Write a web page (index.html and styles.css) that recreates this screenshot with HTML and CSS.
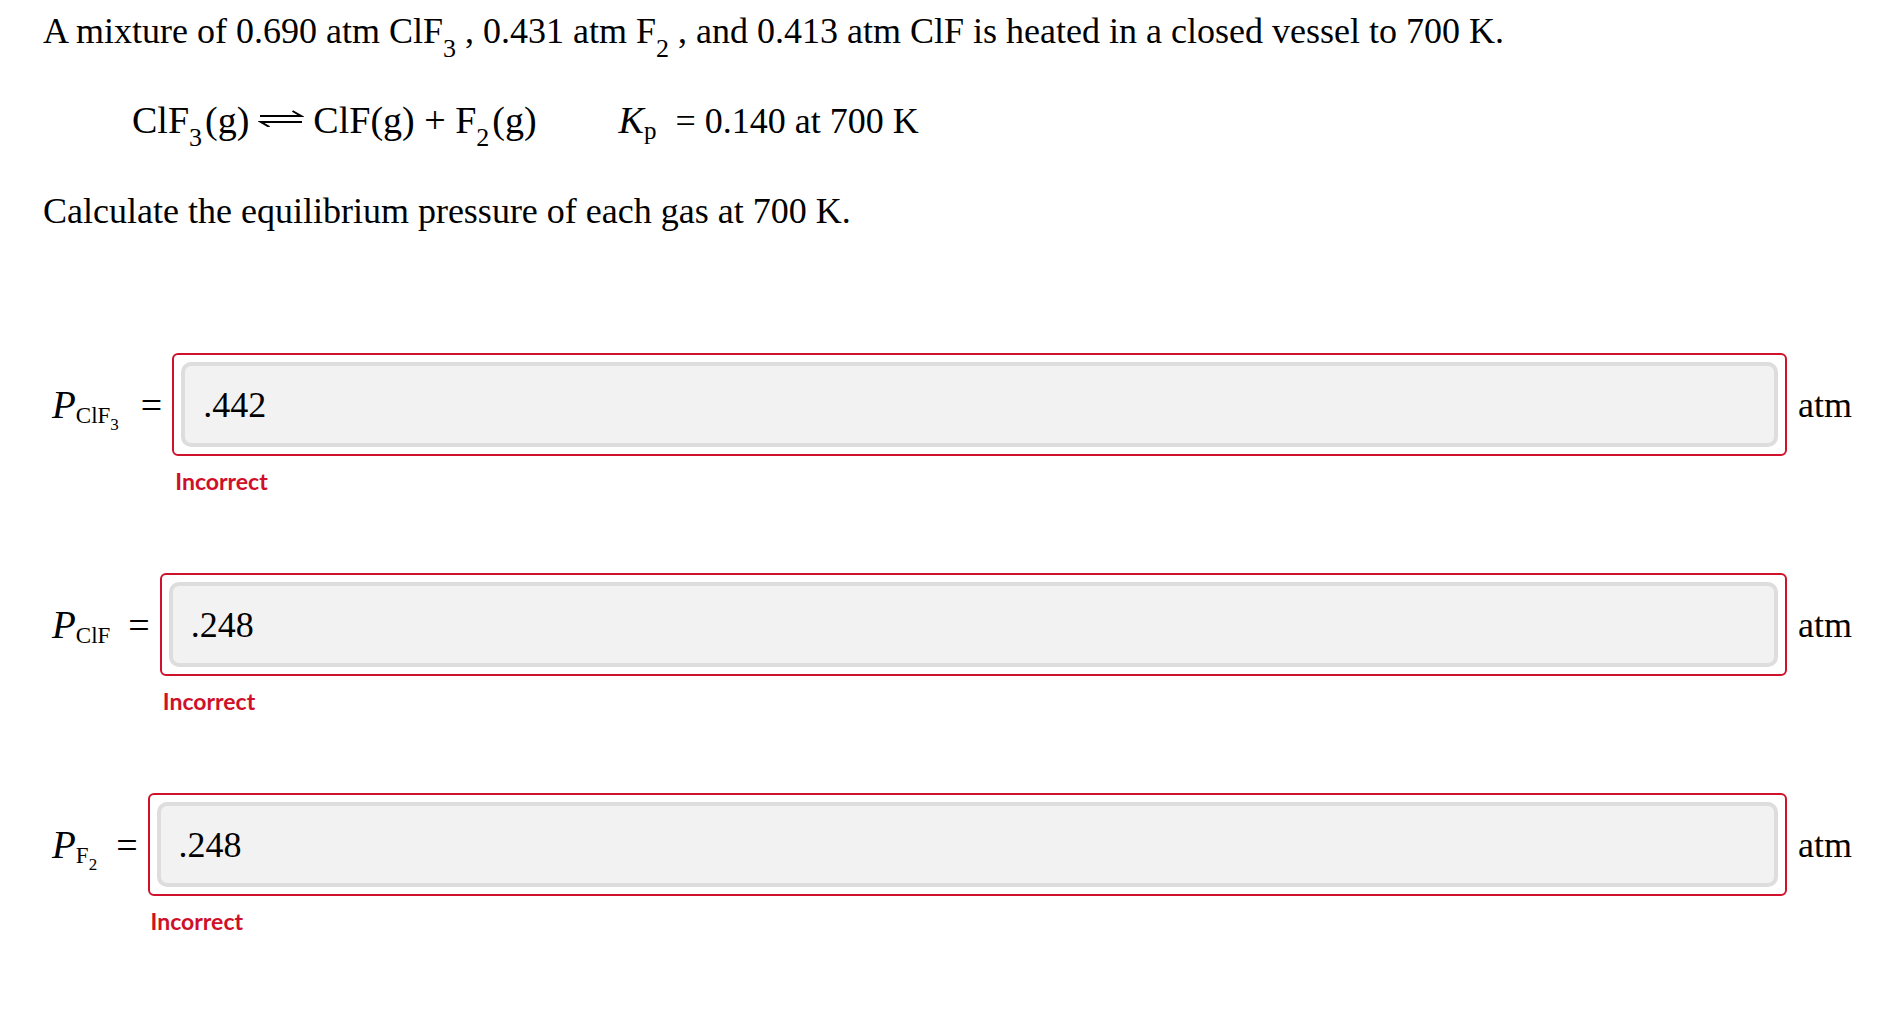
FILE: index.html
```html
<!DOCTYPE html>
<html>
<head>
<meta charset="utf-8">
<link rel="stylesheet" href="styles.css">
</head>
<body>
<div class="page">
  <p class="line l1">A mixture of 0.690 atm ClF<span class="sub">3</span> , 0.431 atm F<span class="sub">2</span> , and 0.413 atm ClF is heated in a closed vessel to 700 K.</p>
  <div class="line eq">
    <span class="rxn">ClF<span class="esub">3</span>(g)<svg class="harp" width="46" height="17" viewBox="0 0 46 17"><path d="M2 6 H43 L34.5 1" fill="none" stroke="#000" stroke-width="2"/><path d="M44 12 H3 L11.5 17" fill="none" stroke="#000" stroke-width="2"/></svg>ClF(g) + F<span class="esub">2</span>(g)</span>
    <span class="kp"><i>K</i><span class="psub">p</span> = 0.140 at 700 K</span>
  </div>
  <p class="line l3">Calculate the equilibrium pressure of each gas at 700 K.</p>

  <div class="answers">
    <div class="row">
      <div class="label"><i class="P">P</i><span class="ps">ClF<span class="pss wide">3</span></span></div>
      <span class="equals">=</span>
      <div class="field">
        <div class="box"><div class="input">.442</div></div>
        <div class="fb">Incorrect</div>
      </div>
      <span class="unit">atm</span>
    </div>
    <div class="row">
      <div class="label"><i class="P">P</i><span class="ps">ClF</span></div>
      <span class="equals">=</span>
      <div class="field">
        <div class="box"><div class="input">.248</div></div>
        <div class="fb">Incorrect</div>
      </div>
      <span class="unit">atm</span>
    </div>
    <div class="row">
      <div class="label"><i class="P">P</i><span class="ps">F<span class="pss">2</span></span></div>
      <span class="equals">=</span>
      <div class="field">
        <div class="box"><div class="input">.248</div></div>
        <div class="fb">Incorrect</div>
      </div>
      <span class="unit">atm</span>
    </div>
  </div>
</div>
</body>
</html>
```

FILE: styles.css
```css
html, body {
  margin: 0;
  padding: 0;
  background: #fff;
}
body {
  font-family: "Liberation Serif", "Times New Roman", serif;
  color: #000;
}
.page {
  padding: 9px 46px 0 43px;
}
.line {
  margin: 0;
  font-size: 36px;
  line-height: 44px;
  height: 44px;
  white-space: nowrap;
}
.sub {
  font-size: 26px;
  line-height: 0;
  vertical-align: -14px;
}
.eq {
  margin-top: 45px;
  padding-left: 89px;
  display: flex;
  align-items: baseline;
  font-size: 38px;
}
.rxn {
  display: inline-block;
}
.esub {
  font-size: 26px;
  line-height: 0;
  vertical-align: -13px;
  margin-right: 3px;
}
.harp {
  vertical-align: 6px;
  margin: 0 9px 0 9px;
}
.kp {
  margin-left: 82px;
  font-size: 36px;
}
.kp i {
  font-style: italic;
  font-size: 38px;
}
.psub {
  font-size: 25px;
  line-height: 0;
  vertical-align: -6px;
  margin-right: 10px;
}
.l3 {
  margin-top: 47px;
}
.answers {
  margin-top: 120px;
  display: flex;
  flex-direction: column;
  gap: 78px;
}
.row {
  display: flex;
  align-items: flex-start;
  padding-left: 9px;
}
.label, .equals, .unit {
  height: 103px;
  display: flex;
  align-items: center;
  font-size: 36px;
  white-space: nowrap;
}
.label {
  display: block;
  line-height: 103px;
}
.P {
  font-size: 39px;
  font-style: italic;
}
.ps {
  font-size: 23px;
  line-height: 0;
  vertical-align: -5px;
}
.pss {
  font-size: 17px;
  line-height: 0;
  vertical-align: -7px;
  margin-right: 1px;
}
.pss.wide {
  margin-right: 4px;
}
.equals {
  font-size: 38px;
  margin: 0 10px 0 18px;
}
.field {
  flex: 1;
  min-width: 0;
}
.box {
  border: 2px solid #d0112b;
  border-radius: 6px;
  padding: 7px;
  height: 103px;
  box-sizing: border-box;
}
.input {
  box-sizing: border-box;
  height: 100%;
  border: 4px solid #dddddd;
  border-radius: 10px;
  background: #f2f2f2;
  padding-left: 18px;
  display: flex;
  align-items: center;
  font-size: 36px;
}
.fb {
  margin-top: 11px;
  font-family: "Lato", "Open Sans", sans-serif;
  font-weight: 700;
  font-size: 23px;
  line-height: 28px;
  color: #cf1029;
  padding-left: 3px;
}
.unit {
  margin-left: 11px;
}
```
